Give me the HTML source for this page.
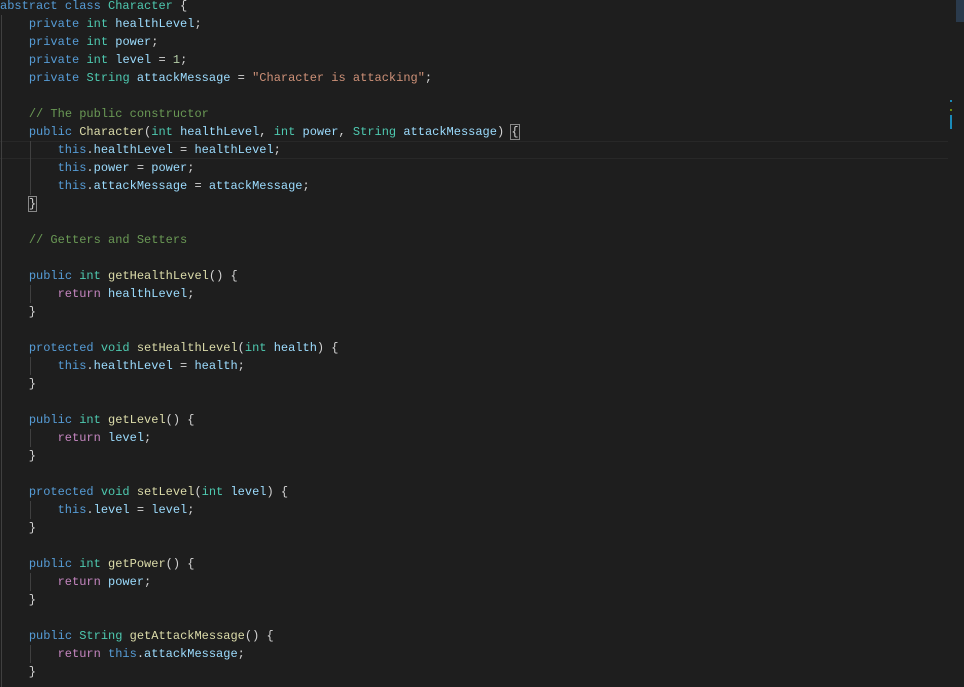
<!DOCTYPE html>
<html><head><style>
html,body{margin:0;padding:0;background:#1e1e1e;width:964px;height:686px;overflow:hidden}
#c{position:absolute;left:0;top:-3px;font-family:"Liberation Mono",monospace;font-size:12px;line-height:18px;color:#d4d4d4;white-space:pre}
.k{color:#569cd6}.t{color:#4ec9b0}.v{color:#9cdcfe}.f{color:#dcdcaa}.s{color:#ce9178}.n{color:#b5cea8}.c{color:#6a9955}.p{color:#c586c0}
.g{position:absolute;width:1px;background:#404040}
.cur{position:absolute;left:0;top:141px;width:948px;height:16px;border-top:1px solid #282828;border-bottom:1px solid #282828}
.br{outline:1px solid #888;}
.mm{position:absolute;left:955px;top:0;width:9px;height:686px;background:#1e1e1e}
</style></head><body>
<div class="cur"></div>
<div class="g" style="left:1px;top:15px;height:672px"></div>
<div class="g" style="left:30px;top:141px;height:54px"></div>
<div class="g" style="left:30px;top:285px;height:18px"></div>
<div class="g" style="left:30px;top:357px;height:18px"></div>
<div class="g" style="left:30px;top:429px;height:18px"></div>
<div class="g" style="left:30px;top:501px;height:18px"></div>
<div class="g" style="left:30px;top:573px;height:18px"></div>
<div class="g" style="left:30px;top:645px;height:18px"></div>
<div id="c"><span class="k">abstract</span> <span class="k">class</span> <span class="t">Character</span> {
    <span class="k">private</span> <span class="t">int</span> <span class="v">healthLevel</span>;
    <span class="k">private</span> <span class="t">int</span> <span class="v">power</span>;
    <span class="k">private</span> <span class="t">int</span> <span class="v">level</span> = <span class="n">1</span>;
    <span class="k">private</span> <span class="t">String</span> <span class="v">attackMessage</span> = <span class="s">"Character is attacking"</span>;

    <span class="c">// The public constructor</span>
    <span class="k">public</span> <span class="f">Character</span>(<span class="t">int</span> <span class="v">healthLevel</span>, <span class="t">int</span> <span class="v">power</span>, <span class="t">String</span> <span class="v">attackMessage</span>) <span class="br">{</span>
        <span class="k">this</span>.<span class="v">healthLevel</span> = <span class="v">healthLevel</span>;
        <span class="k">this</span>.<span class="v">power</span> = <span class="v">power</span>;
        <span class="k">this</span>.<span class="v">attackMessage</span> = <span class="v">attackMessage</span>;
    <span class="br">}</span>

    <span class="c">// Getters and Setters</span>

    <span class="k">public</span> <span class="t">int</span> <span class="f">getHealthLevel</span>() {
        <span class="p">return</span> <span class="v">healthLevel</span>;
    }

    <span class="k">protected</span> <span class="t">void</span> <span class="f">setHealthLevel</span>(<span class="t">int</span> <span class="v">health</span>) {
        <span class="k">this</span>.<span class="v">healthLevel</span> = <span class="v">health</span>;
    }

    <span class="k">public</span> <span class="t">int</span> <span class="f">getLevel</span>() {
        <span class="p">return</span> <span class="v">level</span>;
    }

    <span class="k">protected</span> <span class="t">void</span> <span class="f">setLevel</span>(<span class="t">int</span> <span class="v">level</span>) {
        <span class="k">this</span>.<span class="v">level</span> = <span class="v">level</span>;
    }

    <span class="k">public</span> <span class="t">int</span> <span class="f">getPower</span>() {
        <span class="p">return</span> <span class="v">power</span>;
    }

    <span class="k">public</span> <span class="t">String</span> <span class="f">getAttackMessage</span>() {
        <span class="p">return</span> <span class="k">this</span>.<span class="v">attackMessage</span>;
    }
</div>
<div class="mm">
<div style="position:absolute;left:1px;top:0px;width:8px;height:22px;background:#2a3a4c"></div>
<div style="position:absolute;left:-5px;top:100px;width:2px;height:2px;background:#1a8ab8"></div>
<div style="position:absolute;left:-5px;top:109px;width:2px;height:2px;background:#6a8a10"></div>
<div style="position:absolute;left:-5px;top:115px;width:2px;height:14px;background:#1a8ab8"></div>
</div>
</body></html>
